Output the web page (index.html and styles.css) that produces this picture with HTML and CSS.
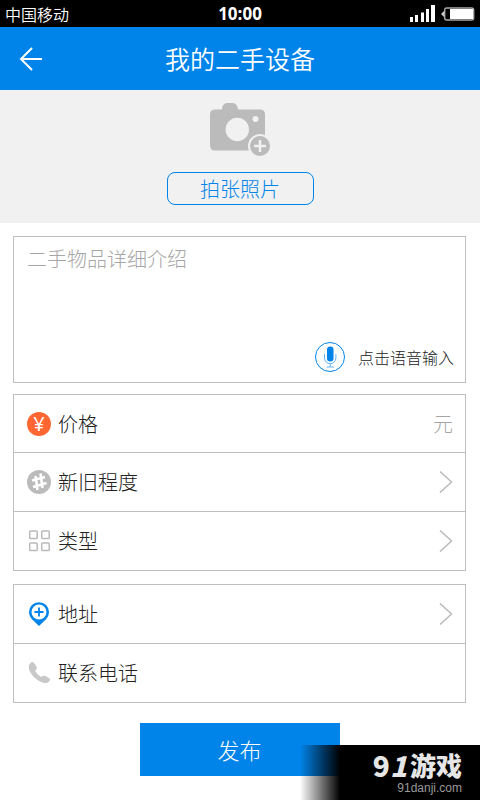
FILE: index.html
```html
<!DOCTYPE html>
<html lang="zh-CN">
<head>
<meta charset="utf-8">
<meta name="viewport" content="width=device-width, initial-scale=1">
<title>我的二手设备</title>
<link rel="stylesheet" href="styles.css">
</head>
<body>
<div class="status">
  <span class="carrier">中国移动</span>
  <time class="clock">10:00</time>
  <span class="indicators">
    <svg width="26" height="17" viewBox="0 0 26 17" fill="#fff" aria-hidden="true"><path d="M0 12h3v5H0zM5 10h3v7H5zM11 7.500h3V17h-3zM16 4h3v13h-3zM21 0h4v17h-4z"/></svg>
    <svg width="34" height="14" viewBox="0 0 34 14" aria-hidden="true"><path d="M3 4L0 7L3 10z" fill="#ccc"/><rect x="3.700" y="1" width="29" height="12" rx="2" fill="none" stroke="#aaa" stroke-width="1.400"/><rect x="9" y="2" width="23" height="10" fill="#fff"/></svg>
  </span>
</div>
<header class="bar">
  <a class="back" href="#" aria-label="返回"><svg width="24" height="24" viewBox="0 0 24 24" fill="none" stroke="#fff" stroke-width="2" aria-hidden="true"><path d="M13 1L2 12L13 23M2 12H23"/></svg></a>
  <h1>我的二手设备</h1>
</header>
<main>
  <section class="photo">
    <svg width="62" height="54" viewBox="0 0 62 54" aria-hidden="true">
      <path d="M6 6.500H13Q13.500 0 18 0H24Q28 0 29 6.500H51Q56 6.500 56 11.500V42Q56 47.500 51 47.500H6Q1 47.500 1 42V11.500Q1 6.500 6 6.500Z" fill="#bbb"/>
      <circle cx="28.300" cy="26.500" r="11.700" fill="#f1f1f1"/>
      <circle cx="46.500" cy="16" r="3" fill="#f1f1f1"/>
      <circle cx="51" cy="43" r="12" fill="#f1f1f1"/>
      <circle cx="51" cy="43" r="10" fill="#bbb"/>
      <path d="M51 37v12M45 43h12" stroke="#f1f1f1" stroke-width="2.500"/>
    </svg>
    <button class="shoot" type="button">拍张照片</button>
  </section>
  <form class="form">
    <div class="box intro">
      <textarea aria-label="二手物品详细介绍" placeholder="二手物品详细介绍"></textarea>
      <button class="voice" type="button">
        <svg width="30" height="30" viewBox="0 0 30 30" fill="none" stroke="#0084ea" aria-hidden="true"><circle cx="15" cy="15" r="14.500"/><rect x="12" y="4.500" width="6.500" height="15" rx="3" fill="#0084ea" stroke="none"/><path d="M9.500 12v4a5.700 5.700 0 0 0 11.400 0V12M15.200 21.500v3.500M11.500 25h7.500" stroke="#65b5f2"/></svg>
        <span>点击语音输入</span>
      </button>
    </div>
    <div class="box">
      <label class="row">
        <span class="icon coin">¥</span>
        <span>价格</span>
        <input class="field" type="text" inputmode="decimal">
        <span class="unit">元</span>
      </label>
      <button class="row" type="button">
        <svg class="icon" width="24" height="24" viewBox="0 0 24 24" aria-hidden="true"><circle cx="12" cy="12" r="12" fill="#bbb"/><path d="M8.500 6L10.500 20M13.500 3.500L15.500 18M5 10.500L18 7M6 17L19.500 13" stroke="#fff" stroke-width="2.600"/></svg>
        <span>新旧程度</span>
        <svg class="chevron" width="14" height="22" viewBox="0 0 14 22" aria-hidden="true"><path d="M1 .5L12.500 11L1 21.500"/></svg>
      </button>
      <button class="row" type="button">
        <svg class="icon" width="24" height="24" viewBox="0 0 24 24" fill="none" stroke="#bbb" stroke-width="1.500" aria-hidden="true"><rect x="2.700" y="2" width="7.500" height="7.500" rx=".8"/><rect x="14.700" y="2" width="7.500" height="7.500" rx=".8"/><rect x="2.700" y="14" width="7.500" height="7.500" rx=".8"/><rect x="14.700" y="14" width="7.500" height="7.500" rx=".8"/></svg>
        <span>类型</span>
        <svg class="chevron" width="14" height="22" viewBox="0 0 14 22" aria-hidden="true"><path d="M1 .5L12.500 11L1 21.500"/></svg>
      </button>
    </div>
    <div class="box">
      <button class="row" type="button">
        <svg class="icon" width="24" height="24" viewBox="0 0 24 24" aria-hidden="true"><path d="M12 24L5 17.300A10 10 0 1 1 19 17.300Z" fill="#0084ea"/><circle cx="12" cy="10" r="7.500" fill="#fff"/><path d="M12 5.500v9M7.500 10h9" stroke="#0084ea" stroke-width="1.800"/></svg>
        <span>地址</span>
        <svg class="chevron" width="14" height="22" viewBox="0 0 14 22" aria-hidden="true"><path d="M1 .5L12.500 11L1 21.500"/></svg>
      </button>
      <label class="row">
        <svg class="icon" width="24" height="24" viewBox="0 0 24 24" aria-hidden="true"><path d="M2.500 3L4.500 1.200Q6 .6 7 2L9.700 6Q10.300 7.500 9 8.500Q8 9.300 8.500 10.500Q10.500 14 14 15.800Q15 16 15.800 15Q16.700 14.200 18 14.800L22.500 17.500Q23.700 18.500 22.700 19.800L21 21.500Q18.500 22.800 14 21Q5 16.500 2 8.500Q1 5 2.500 3Z" fill="#c8c8c8"/></svg>
        <span>联系电话</span>
        <input class="field" type="tel">
      </label>
    </div>
    <button class="publish" type="submit">发布</button>
  </form>
</main>
<aside class="mark">
  <div class="brand"><span class="num">9<i>1</i></span><span>游戏</span></div>
  <div class="site">91danji.com</div>
</aside>
</body>
</html>
```
FILE: styles.css
```css
* { box-sizing: border-box; }
body {
  margin: 0;
  min-height: 100vh;
  position: relative;
  background: #fff;
  color: #222;
  font-family: "Noto Sans CJK SC", sans-serif;
  font-weight: 300;
  font-size: 20px;
}
button, input, textarea { font: inherit; color: inherit; border: 0; padding: 0; background: none; }
svg { display: block; flex: none; }
.status {
  height: 27px;
  padding: 0 5px;
  display: grid;
  grid-template-columns: 1fr auto 1fr;
  align-items: center;
  background: #000;
  color: #fff;
  font-size: 16px;
  font-weight: 350;
}
.clock { font-family: "Open Sans", sans-serif; font-size: 17px; font-weight: 700; }
.indicators { display: flex; justify-content: flex-end; align-items: center; gap: 5px; }
.bar {
  height: 63px;
  padding: 0 19px 2px;
  display: grid;
  grid-template-columns: 1fr auto 1fr;
  align-items: center;
  background: #0084ea;
  color: #fff;
}
.back { justify-self: start; padding-top: 2px; }
.bar h1 { margin: 0; font-size: 25px; font-weight: 350; line-height: 32px; }
.photo {
  padding: 13px 0 18px;
  display: flex;
  flex-direction: column;
  align-items: center;
  gap: 15px;
  background: #f1f1f1;
}
.shoot {
  width: 147px;
  height: 33px;
  border: 1px solid #0084ea;
  border-radius: 8px;
  color: #0084ea;
  line-height: 30px;
}
.form { padding: 13px 14px 24px 13px; display: flex; flex-direction: column; gap: 13px; }
.box { border: 1px solid #bfbfbf; }
.intro { display: flex; flex-direction: column; margin-bottom: -2px; }
.intro textarea { height: 105px; padding: 7px 13px; resize: none; line-height: 30px; outline: 0; }
.intro textarea::placeholder { color: #a6a6a6; opacity: 1; }
.voice {
  align-self: flex-end;
  margin: 0 11px 10px;
  display: flex;
  align-items: center;
  gap: 13px;
  font-size: 16px;
}
.row {
  width: 100%;
  height: 58px;
  padding: 0 12px 0 13px;
  display: flex;
  align-items: center;
  gap: 7px;
  text-align: left;
  line-height: 30px;
}
label.row:first-child { height: 57px; }
.row + .row { height: 59px; border-top: 1px solid #bfbfbf; }
.icon { flex: none; }
.coin {
  width: 24px;
  height: 24px;
  border-radius: 50%;
  background: #ff6632;
  color: #fff;
  font-family: "Noto Sans", sans-serif;
  font-size: 20px;
  font-weight: 400;
  line-height: 24px;
  text-align: center;
}
.field { flex: 1; min-width: 0; outline: 0; }
.unit { color: #a6a6a6; }
.chevron { margin-left: auto; fill: none; stroke: #bbb; stroke-width: 1.5; }
.publish {
  align-self: center;
  width: 200px;
  height: 53px;
  margin-top: 7px;
  background: #0084ea;
  color: #fff;
  font-size: 22px;
  line-height: 32px;
  padding-bottom: 2px;
}
.mark {
  position: absolute;
  right: 0;
  bottom: 0;
  width: 180px;
  height: 55px;
  padding: 5px 18px 0 0;
  text-align: right;
  background: linear-gradient(to right, transparent, #000 40px);
  color: #e6e6e6;
}
.brand { display: flex; justify-content: flex-end; gap: 3px; font-size: 26px; font-weight: 900; line-height: 30px; }
.num { font-size: 28px; }
.site { padding-top: 1px; font-family: "Liberation Sans", sans-serif; font-size: 12px; font-weight: 400; line-height: 14px; color: #999; }
```
